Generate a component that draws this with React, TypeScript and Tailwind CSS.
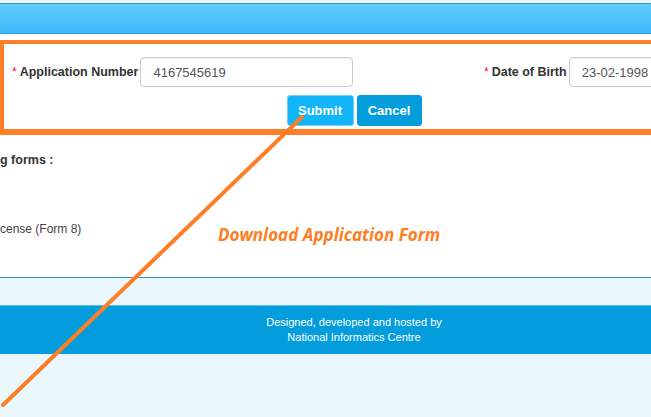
export default function App() {
  return (
    <div className="relative h-[417px] w-[651px] overflow-hidden bg-[#eaf8fd] font-['Liberation_Sans',Arial,sans-serif] text-[#333]">
      <div className="w-[708px]">
        {/* header strip */}
        <div className="h-[3px] bg-[#f1f5f8]" />
        <div className="h-[31px] border-y border-[#2b9dd2] bg-gradient-to-b from-[#5ecdfd] to-[#3cbbf8]" />

        <div className="bg-white pt-[6px]">
          {/* highlighted search form */}
          <section className="border-x-4 border-t-4 border-b-[6px] border-[#fe7f27] pt-[13px] pb-[3px]">
            <div className="grid h-[30px] grid-cols-2">
              <div className="flex items-center pl-[8px]">
                <span className="mr-[3px] text-[12px] text-[#e8202a]">*</span>
                <label className="text-[12.5px] font-bold text-[#333]">Application Number</label>
                <input
                  readOnly
                  value="4167545619"
                  className="ml-[2px] h-[30px] w-[213px] rounded-[4px] border border-[#cccccc] px-[12px] text-[13px] text-[#555] shadow-[inset_0_1px_1px_rgba(0,0,0,0.075)] outline-none"
                />
              </div>
              <div className="flex items-center pl-[130px]">
                <span className="mr-[3px] text-[12px] text-[#e8202a]">*</span>
                <label className="text-[12.5px] font-bold text-[#333]">Date of Birth</label>
                <input
                  readOnly
                  value="23-02-1998"
                  className="ml-[2px] h-[30px] w-[130px] rounded-[4px] border border-[#cccccc] px-[12px] text-[13px] text-[#555] shadow-[inset_0_1px_1px_rgba(0,0,0,0.075)] outline-none"
                />
              </div>
            </div>
            <div className="mt-[8px] flex justify-center gap-[3px]">
              <button className="h-[31px] w-[67px] rounded-[3px] border border-[#74cdf8] bg-[#12b5f8] text-[13px] font-bold text-white">
                Submit
              </button>
              <button className="h-[31px] w-[65px] rounded-[3px] border border-[#039ddc] bg-[#039ddc] text-[13px] font-bold text-white">
                Cancel
              </button>
            </div>
          </section>

          {/* forms list */}
          <div className="h-[142px]">
            <div className="pt-[18px] text-[12.5px] leading-[15px] font-bold">g forms :</div>
            <div className="mt-[54px] flex items-start">
              <span className="w-[218px] shrink-0 text-[12px] leading-[15px] text-[#444]">cense (Form 8)</span>
              <span className="mt-[2px] font-['Open_Sans',sans-serif] text-[17px] leading-[22px] font-bold italic text-[#fd7e23]">
                Download Application Form
              </span>
            </div>
          </div>
        </div>

        <div className="h-[28px] border-t border-[#2a96c8]" />
        <footer className="h-[49px] border-t border-[#5cc2ee] bg-[#039ddd] pt-[9px] text-center text-[11px] leading-[15px] text-white">
          <p>Designed, developed and hosted by</p>
          <p>National Informatics Centre</p>
        </footer>
      </div>

      {/* annotation arrow */}
      <svg className="pointer-events-none absolute inset-0" width="651" height="417" viewBox="0 0 651 417">
        <line x1="302" y1="117" x2="3" y2="405" stroke="#fd7e27" strokeWidth="4" strokeLinecap="round" />
      </svg>
    </div>
  );
}
